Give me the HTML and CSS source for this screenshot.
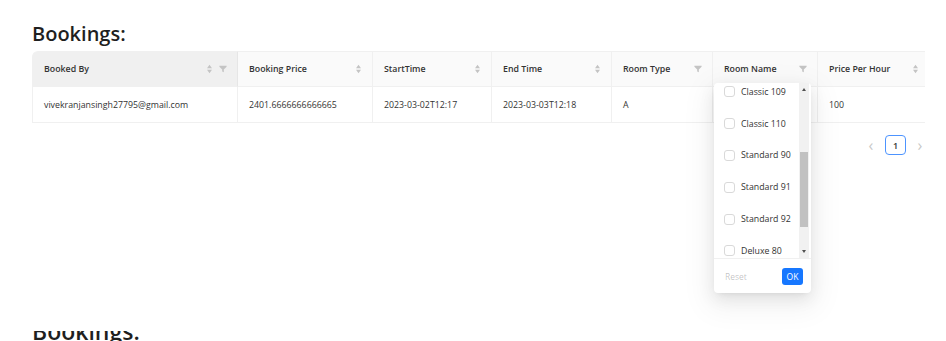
FILE: index.html
```html
<!DOCTYPE html>
<html>
<head>
<meta charset="utf-8">
<link rel="stylesheet" href="styles.css">
</head>
<body>
<div class="page">
  <h3 class="title">Bookings:</h3>
  <div class="clip">
    <div class="inner">
      <table class="tbl">
        <colgroup>
          <col style="width:206px"><col style="width:135px"><col style="width:119px"><col style="width:120px"><col style="width:101px"><col style="width:105px"><col style="width:112px">
        </colgroup>
        <thead>
          <tr>
            <th class="active"><div class="th"><span>Booked By</span><span class="icons"><svg class="sorter" viewBox="0 0 8 12"><path d="M4 1 L7 5 H1 Z M4 11 L7 7 H1 Z"/></svg><svg class="filter" viewBox="0 0 10 10"><path d="M0.5 1 H9.5 V2.2 L6 5.6 V9 L4 8 V5.6 L0.5 2.2 Z"/></svg></span></div></th>
            <th><div class="th"><span>Booking Price</span><span class="icons"><svg class="sorter" viewBox="0 0 8 12"><path d="M4 1 L7 5 H1 Z M4 11 L7 7 H1 Z"/></svg></span></div></th>
            <th><div class="th"><span>StartTime</span><span class="icons"><svg class="sorter" viewBox="0 0 8 12"><path d="M4 1 L7 5 H1 Z M4 11 L7 7 H1 Z"/></svg></span></div></th>
            <th><div class="th"><span>End Time</span><span class="icons"><svg class="sorter" viewBox="0 0 8 12"><path d="M4 1 L7 5 H1 Z M4 11 L7 7 H1 Z"/></svg></span></div></th>
            <th><div class="th"><span>Room Type</span><span class="icons"><svg class="filter" viewBox="0 0 10 10"><path d="M0.5 1 H9.5 V2.2 L6 5.6 V9 L4 8 V5.6 L0.5 2.2 Z"/></svg></span></div></th>
            <th><div class="th"><span>Room Name</span><span class="icons"><svg class="filter" viewBox="0 0 10 10"><path d="M0.5 1 H9.5 V2.2 L6 5.6 V9 L4 8 V5.6 L0.5 2.2 Z"/></svg></span></div></th>
            <th><div class="th"><span>Price Per Hour</span><span class="icons"><svg class="sorter" viewBox="0 0 8 12"><path d="M4 1 L7 5 H1 Z M4 11 L7 7 H1 Z"/></svg></span></div></th>
          </tr>
        </thead>
        <tbody>
          <tr>
            <td>vivekranjansingh27795@gmail.com</td>
            <td>2401.6666666666665</td>
            <td>2023-03-02T12:17</td>
            <td>2023-03-03T12:18</td>
            <td>A</td>
            <td></td>
            <td>100</td>
          </tr>
        </tbody>
      </table>
      <div class="pager">
        <span class="pg-arrow">&#8249;</span>
        <span class="pg-item">1</span>
        <span class="pg-arrow">&#8250;</span>
      </div>
    </div>
  </div>
  <div class="dropdown">
    <div class="list">
      <div class="items">
        <label class="item"><span class="cb"></span>Classic 109</label>
        <label class="item"><span class="cb"></span>Classic 110</label>
        <label class="item"><span class="cb"></span>Standard 90</label>
        <label class="item"><span class="cb"></span>Standard 91</label>
        <label class="item"><span class="cb"></span>Standard 92</label>
        <label class="item"><span class="cb"></span>Deluxe 80</label>
      </div>
      <div class="sbar">
        <span class="sarrow up"></span>
        <div class="strack"><div class="sthumb"></div></div>
        <span class="sarrow down"></span>
      </div>
    </div>
    <div class="dfoot">
      <span class="reset">Reset</span>
      <span class="ok">OK</span>
    </div>
  </div>
  <div class="bottom-clip"><h3 class="title second">Bookings:</h3></div>
</div>
</body>
</html>
```

FILE: styles.css
```css
* { box-sizing: border-box; }
html, body { margin: 0; padding: 0; background: #fff; }
body {
  font-family: "Open Sans", "Noto Sans", sans-serif;
  color: rgba(0,0,0,0.88);
  width: 946px;
  height: 341px;
  overflow: hidden;
}
.page {
  position: relative;
  padding: 20px 0 0 32px;
}
.title {
  margin: 0;
  font-size: 20px;
  font-weight: 600;
  line-height: 28px;
  height: 31px;
  color: #1f1f1f;
}
.clip {
  width: 893px;
  overflow: hidden;
}
.inner { width: 912px; }
.tbl {
  border-collapse: separate;
  border-spacing: 0;
  table-layout: fixed;
  width: 898px;
  font-size: 8.8px;
}
.tbl th, .tbl td {
  border-right: 1px solid #f0f0f0;
  border-bottom: 1px solid #f0f0f0;
  padding: 0 10px 0 11px;
  text-align: left;
  height: 36px;
  white-space: nowrap;
}
.tbl th:first-child, .tbl td:first-child { border-left: 1px solid #f0f0f0; }
.tbl th {
  background: #fafafa;
  border-top: 1px solid #f0f0f0;
  font-weight: 600;
  color: #333;
}
.tbl th:first-child { border-top-left-radius: 6px; }
.tbl th.active { background: #f0f0f0; border-right: 1px solid #e6e6e6; }
.th {
  display: flex;
  align-items: center;
  justify-content: space-between;
}
.icons { display: flex; align-items: center; gap: 6px; }
.sorter { width: 7px; height: 10px; fill: #c4c4c4; }
.filter { width: 8px; height: 8px; fill: #c4c4c4; }
.tbl td { color: #333; }
.pager {
  display: flex;
  justify-content: flex-end;
  align-items: center;
  gap: 4px;
  margin-top: 12px;
  padding-right: 14px;
}
.pg-arrow {
  width: 20px;
  text-align: center;
  color: #c8c8c8;
  font-size: 16px;
  line-height: 20px;
}
.pg-item {
  width: 21px;
  height: 20px;
  border: 1px solid #4d94ff;
  border-radius: 4px;
  font-size: 9px;
  font-weight: 600;
  color: #333;
  display: flex;
  align-items: center;
  justify-content: center;
}
.dropdown {
  position: absolute;
  left: 714px;
  top: 83px;
  width: 97px;
  background: #fff;
  border-radius: 4px;
  box-shadow: 0 3px 6px -4px rgba(0,0,0,0.12), 0 6px 16px 0 rgba(0,0,0,0.08), 0 9px 28px 8px rgba(0,0,0,0.05);
}
.list {
  display: flex;
  height: 175px;
  overflow: hidden;
}
.items {
  flex: 1;
  margin-top: -7px;
  font-size: 8.8px;
  color: #333;
}
.item {
  display: flex;
  align-items: center;
  height: 31.8px;
  padding-left: 10px;
  gap: 6px;
  white-space: nowrap;
}
.cb {
  width: 11px;
  height: 11px;
  border: 1px solid #d9d9d9;
  border-radius: 3px;
  background: #fff;
}
.sbar {
  width: 10px;
  margin-right: 2px;
  background: #f1f1f1;
  display: flex;
  flex-direction: column;
}
.sarrow { height: 12px; position: relative; }
.sarrow::after {
  content: "";
  position: absolute;
  left: 3px;
  border-left: 2px solid transparent;
  border-right: 2px solid transparent;
}
.sarrow.up::after { top: 5px; border-bottom: 3px solid #505050; }
.sarrow.down::after { top: 4px; border-top: 3px solid #505050; }
.strack { flex: 1; padding: 57px 1px 0; }
.sthumb { height: 75px; background: #c1c1c1; }
.dfoot {
  border-top: 1px solid #f0f0f0;
  height: 35px;
  display: flex;
  justify-content: space-between;
  align-items: center;
  padding: 0 8px 0 11px;
}
.reset { font-size: 8.5px; color: rgba(0,0,0,0.25); }
.ok {
  background: #1677ff;
  color: #fff;
  font-size: 8.5px;
  border-radius: 3px;
  width: 21px;
  height: 17px;
  display: flex;
  align-items: center;
  justify-content: center;
}
.bottom-clip {
  position: absolute;
  left: 32px;
  top: 331px;
  height: 10px;
  overflow: hidden;
}
.second { font-size: 23px; margin-top: -14px; }
```
